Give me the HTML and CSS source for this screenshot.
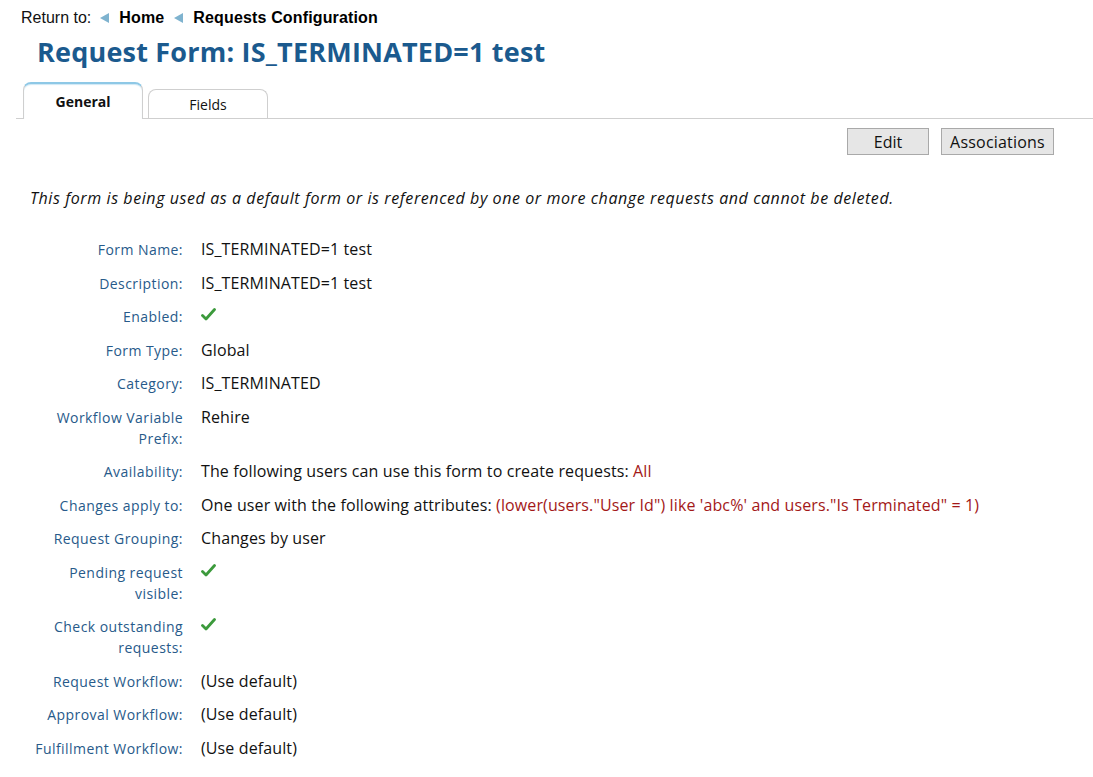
FILE: index.html
```html
<!DOCTYPE html>
<html>
<head>
<meta charset="utf-8">
<link rel="stylesheet" href="styles.css">
</head>
<body>
<div class="breadcrumb">
  <span class="return">Return to:</span>
  <span class="crumb"><svg class="arrow" width="9" height="10" viewBox="0 0 9 10"><polygon points="0,5 9,0 9,10" fill="#7fb3cf"/></svg><b>Home</b></span>
  <span class="crumb"><svg class="arrow" width="9" height="10" viewBox="0 0 9 10"><polygon points="0,5 9,0 9,10" fill="#7fb3cf"/></svg><b>Requests Configuration</b></span>
</div>
<h1 class="title">Request Form: IS_TERMINATED=1 test</h1>
<div class="tabs">
  <div class="tab active">General</div>
  <div class="tab">Fields</div>
</div>
<div class="actions">
  <button class="btn btn-edit">Edit</button>
  <button class="btn btn-assoc">Associations</button>
</div>
<p class="notice">This form is being used as a default form or is referenced by one or more change requests and cannot be deleted.</p>
<table class="details">
  <tr><th>Form Name:</th><td>IS_TERMINATED=1 test</td></tr>
  <tr><th>Description:</th><td>IS_TERMINATED=1 test</td></tr>
  <tr><th>Enabled:</th><td><svg class="check" width="15" height="13" viewBox="0 0 15 13"><path d="M1.5 7.5 L5 11 L13.5 1.5" fill="none" stroke="#3c9a3c" stroke-width="2.8" stroke-linecap="round" stroke-linejoin="round"/></svg></td></tr>
  <tr><th>Form Type:</th><td>Global</td></tr>
  <tr><th>Category:</th><td>IS_TERMINATED</td></tr>
  <tr><th>Workflow Variable Prefix:</th><td>Rehire</td></tr>
  <tr><th>Availability:</th><td>The following users can use this form to create requests: <span class="red">All</span></td></tr>
  <tr><th>Changes apply to:</th><td>One user with the following attributes: <span class="red">(lower(users."User Id") like 'abc%' and users."Is Terminated" = 1)</span></td></tr>
  <tr><th>Request Grouping:</th><td>Changes by user</td></tr>
  <tr><th>Pending request visible:</th><td><svg class="check" width="15" height="13" viewBox="0 0 15 13"><path d="M1.5 7.5 L5 11 L13.5 1.5" fill="none" stroke="#3c9a3c" stroke-width="2.8" stroke-linecap="round" stroke-linejoin="round"/></svg></td></tr>
  <tr><th>Check outstanding requests:</th><td><svg class="check" width="15" height="13" viewBox="0 0 15 13"><path d="M1.5 7.5 L5 11 L13.5 1.5" fill="none" stroke="#3c9a3c" stroke-width="2.8" stroke-linecap="round" stroke-linejoin="round"/></svg></td></tr>
  <tr><th>Request Workflow:</th><td>(Use default)</td></tr>
  <tr><th>Approval Workflow:</th><td>(Use default)</td></tr>
  <tr><th>Fulfillment Workflow:</th><td>(Use default)</td></tr>
</table>
</body>
</html>
```
FILE: styles.css
```css
body {
  margin: 0;
  font-family: "Open Sans", sans-serif;
  color: #111;
  background: #fff;
}
.breadcrumb {
  font-family: "Liberation Sans", Arial, sans-serif;
  font-size: 16px;
  padding: 8px 0 0 21px;
  height: 20px;
  line-height: 18px;
  display: flex;
  align-items: center;
  color: #111;
}
.return { margin-right: 9px; }
.crumb { display: inline-flex; align-items: center; margin-right: 10px; }
.crumb b { font-weight: bold; color: #000; letter-spacing: 0.15px; }
.arrow { margin-right: 10px; }
.title {
  margin: 6px 0 0 37px;
  font-size: 27px;
  font-weight: bold;
  color: #1b5a8e;
  line-height: 36px;
  height: 38px;
  letter-spacing: 0.2px;
}
.tabs {
  display: flex;
  align-items: flex-end;
  margin: 10px 0 0 16px;
  padding-left: 7px;
  border-bottom: 1px solid #cfcfcf;
  height: 36px;
}
.tab {
  box-sizing: border-box;
  width: 120px;
  height: 29px;
  border: 1px solid #cfcfcf;
  border-bottom: none;
  border-radius: 8px 8px 0 0;
  text-align: center;
  font-size: 14px;
  line-height: 29px;
  margin-right: 5px;
  background: #fff;
}
.tab.active {
  font-weight: bold;
  line-height: 36px;
  border-top: 2px solid #8ec8e6;
  box-shadow: inset 0 1px 1px #cfe8f5;
  margin-bottom: -1px;
  height: 37px;
}
.actions {
  display: flex;
  justify-content: flex-end;
  gap: 12px;
  padding: 9px 39px 0 0;
}
.btn {
  font-family: "Open Sans", sans-serif;
  font-size: 16px;
  color: #111;
  background: #e6e6e6;
  border: 1px solid #a9a9a9;
  height: 27px;
  padding: 0 8px;
  line-height: 24px;
  box-sizing: border-box;
}
.btn-edit { width: 82px; }
.btn-assoc { width: 113px; letter-spacing: 0.2px; }
.notice {
  font-style: italic;
  font-size: 16px;
  margin: 32px 0 0 30px;
  line-height: 22px;
  letter-spacing: 0.58px;
}
.details {
  border-collapse: collapse;
  margin: 24px 0 0 28px;
}
.details th {
  width: 155px;
  text-align: right;
  vertical-align: top;
  font-weight: normal;
  font-size: 14px;
  color: #275a8a;
  line-height: 21px;
  padding: 6px 0 6.5px 0;
  letter-spacing: 0.45px;
}
.details td {
  vertical-align: top;
  font-size: 16px;
  line-height: 21px;
  padding: 6px 0 6.5px 18px;
  color: #111;
  letter-spacing: 0.12px;
}
.red { color: #a31818; }
.check { display: block; margin-top: 2px; }
```
